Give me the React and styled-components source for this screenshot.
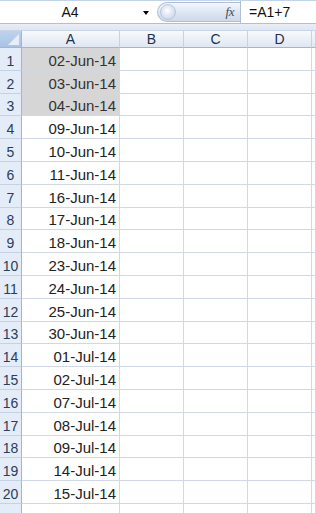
import React from 'react';
import styled, { createGlobalStyle } from 'styled-components';

const GlobalStyle = createGlobalStyle`
    html, body {
        margin: 0;
        padding: 0;
        background: #ffffff;
        overflow: hidden;
    }
    body {
        font-family: "Liberation Sans", Arial, sans-serif;
    }
`

const dates = [
    '02-Jun-14', '03-Jun-14', '04-Jun-14', '09-Jun-14', '10-Jun-14',
    '11-Jun-14', '16-Jun-14', '17-Jun-14', '18-Jun-14', '23-Jun-14',
    '24-Jun-14', '25-Jun-14', '30-Jun-14', '01-Jul-14', '02-Jul-14',
    '07-Jul-14', '08-Jul-14', '09-Jul-14', '14-Jul-14', '15-Jul-14',
]

const COLS = '22px 98px 64px 64px 64px 1fr'
const ROW_H = 22.8

const Screen = styled.div`
    width: 316px;
    height: 513px;
    overflow: hidden;
    background: #ffffff;
`

const FormulaBar = styled.div`
    display: flex;
    align-items: stretch;
    height: 22px;
    border-top: 1px solid #c3d3e8;
    border-bottom: 1px solid #aebfd6;
    background: #ffffff;
`

const NameBox = styled.div`
    width: 140px;
    display: flex;
    align-items: center;
    justify-content: center;
    font-size: 14px;
    color: #111;
`

const DropArrow = styled.div`
    width: 12px;
    display: flex;
    align-items: center;
    justify-content: center;
    &::after {
        content: '';
        margin-top: 2px;
        border-left: 3.5px solid transparent;
        border-right: 3.5px solid transparent;
        border-top: 4px solid #000;
    }
`

const Pill = styled.div`
    width: 83px;
    margin: 1px 0 1px 5px;
    border-radius: 11px 0 0 11px;
    border: 1px solid #aebfd6;
    border-right: none;
    background: linear-gradient(#f4f7fc, #dbe5f2 55%, #cddaec);
    display: flex;
    align-items: center;
    justify-content: space-between;
    padding: 0 6px 0 2px;
    box-sizing: border-box;
`

const Knob = styled.div`
    width: 16px;
    height: 16px;
    border-radius: 50%;
    background: radial-gradient(circle at 45% 40%, #ffffff 0, #e6ecf5 35%, #c1cfe2 100%);
    border: 1px solid #b7c7dc;
    box-sizing: border-box;
`

const Fx = styled.span`
    font-family: "Liberation Serif", "Times New Roman", serif;
    font-style: italic;
    font-size: 13px;
    color: #4a4a4a;
    letter-spacing: -0.5px;
`

const FormulaInput = styled.div`
    flex: 1;
    border-left: 1px solid #aebfd6;
    display: flex;
    align-items: center;
    padding-left: 8px;
    font-size: 14px;
    color: #111;
`

const Band = styled.div`
    height: 6px;
    background: linear-gradient(#e9eef6, #dde6f2);
    border-bottom: 1px solid #c8d5e6;
`

const GridRow = styled.div`
    display: grid;
    grid-template-columns: ${COLS};
    height: ${p => p.$h}px;
    box-sizing: border-box;
`

const Corner = styled.div`
    position: relative;
    background: linear-gradient(#bfd2ec, #a9c3e6);
    border-right: 1px solid #9eb6ce;
    border-bottom: 1px solid #9eb6ce;
    box-sizing: border-box;
    &::after {
        content: '';
        position: absolute;
        right: 2px;
        bottom: 2px;
        border-left: 11px solid transparent;
        border-bottom: 11px solid #e9eef6;
    }
`

const ColHead = styled.div`
    display: flex;
    align-items: center;
    justify-content: center;
    font-size: 14px;
    color: #1e3050;
    background: linear-gradient(#f7f9fc, #e9eef6 60%, #dfe7f2);
    border-right: 1px solid #c5d2e3;
    border-bottom: 1px solid #9eb6ce;
    box-sizing: border-box;
`

const RowHead = styled.div`
    display: flex;
    align-items: center;
    justify-content: center;
    padding-top: 3px;
    font-size: 14px;
    color: #2a3d5c;
    background: #e4ecf7;
    border-right: 1px solid #9eb6ce;
    border-bottom: 1px solid #c5d2e3;
    box-sizing: border-box;
`

const Cell = styled.div`
    display: flex;
    align-items: center;
    justify-content: flex-end;
    padding: 2px 3px 0 0;
    font-size: 15px;
    color: ${p => (p.$sel ? '#333333' : '#222222')};
    background: ${p => (p.$sel ? '#d6d6d6' : '#ffffff')};
    border-right: 1px solid #d0d7e5;
    border-bottom: 1px solid #d0d7e5;
    box-sizing: border-box;
    white-space: nowrap;
`

const App = () => {
    const rowHeight = i => Math.round((i + 1) * ROW_H) - Math.round(i * ROW_H)

    return (
        <Screen>
            <GlobalStyle />
            <FormulaBar>
                <NameBox>A4</NameBox>
                <DropArrow />
                <Pill>
                    <Knob />
                    <Fx>fx</Fx>
                </Pill>
                <FormulaInput>=A1+7</FormulaInput>
            </FormulaBar>
            <Band />
            <GridRow $h={17}>
                <Corner />
                <ColHead>A</ColHead>
                <ColHead>B</ColHead>
                <ColHead>C</ColHead>
                <ColHead>D</ColHead>
                <ColHead />
            </GridRow>
            {dates.map((d, i) => (
                <GridRow key={i} $h={rowHeight(i)}>
                    <RowHead>{i + 1}</RowHead>
                    <Cell $sel={i < 3}>{d}</Cell>
                    <Cell />
                    <Cell />
                    <Cell />
                    <Cell />
                </GridRow>
            ))}
            <GridRow $h={12}>
                <RowHead />
                <Cell />
                <Cell />
                <Cell />
                <Cell />
                <Cell />
            </GridRow>
        </Screen>
    )
}

export default App
